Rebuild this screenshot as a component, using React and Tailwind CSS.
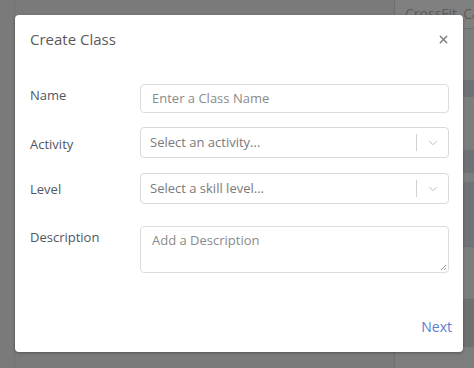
import React from "react";
import { ChevronDown, X } from "lucide-react";

function SelectBox({ placeholder }) {
  return (
    <div className="flex h-[31px] items-center rounded-[4px] border border-[#d9d9d9] bg-white pl-[9px]">
      <span className="flex-1 text-[13px] text-[#7a7a7a]">{placeholder}</span>
      <span className="h-[17px] w-px bg-[#d0d0d0]" />
      <span className="flex w-[31px] items-center justify-center">
        <ChevronDown className="h-[14px] w-[14px] text-[#b5b5b5]" strokeWidth={1.5} />
      </span>
    </div>
  );
}

export default function App() {
  return (
    <div
      className="relative h-[368px] w-[474px] overflow-hidden bg-[#7a7a7a]"
      style={{ fontFamily: '"Open Sans", "Liberation Sans", sans-serif' }}
    >
      {/* page behind the overlay */}
      <div className="absolute right-0 top-0 h-full w-[80px] border-l border-[#6f6f6f] bg-[#7d7d7d]">
        <div className="h-[29px] border-b border-[#6e6e6e] bg-[#808080] pl-[10px] pt-[3px] text-[14px] text-[#5c5c5c]">
          CrossFit_Ca
        </div>
        <div className="h-[51px]" />
        <div className="h-[17px] bg-[#6f7174]" />
        <div className="h-[53px]" />
        <div className="h-[23px] bg-[#6f7174]" />
        <div className="h-[9px]" />
        <div className="h-[65px] border-b border-[#6d6d6d] bg-[#6f7276]" />
        <div className="h-[53px] border-b border-[#6d6d6d]" />
        <div className="h-[47px] bg-[#707070]" />
      </div>
      <div className="absolute left-[14px] top-0 h-full w-px bg-[#737373]" />

      <div className="absolute left-[15px] top-[15px] flex h-[337px] w-[448px] flex-col rounded-[4px] bg-white shadow-[0_1px_3px_rgba(0,0,0,0.3)]">
        <div className="flex h-[48px] items-center justify-between pl-[15px] pr-[15px]">
          <span className="text-[15px] text-[#5a5a5a]">Create Class</span>
          <X className="mr-[-2px] h-[13px] w-[13px] text-[#777]" strokeWidth={2.5} />
        </div>

        <div className="mt-[21px] flex flex-col pl-[15px] pr-[14px]">
          <div className="flex">
            <div className="w-[110px] pt-[2px] text-[13px] text-[#4f5663]">Name</div>
            <div className="flex h-[29px] flex-1 items-center rounded-[4px] border border-[#dcdcdc] pl-[11px] text-[13px] text-[#8a8a8a]">
              Enter a Class Name
            </div>
          </div>

          <div className="mt-[14px] flex">
            <div className="w-[110px] pt-[8px] text-[13px] text-[#4f5663]">Activity</div>
            <div className="flex-1">
              <SelectBox placeholder="Select an activity..." />
            </div>
          </div>

          <div className="mt-[15px] flex">
            <div className="w-[110px] pt-[7px] text-[13px] text-[#4f5663]">Level</div>
            <div className="flex-1">
              <SelectBox placeholder="Select a skill level..." />
            </div>
          </div>

          <div className="mt-[22px] flex">
            <div className="w-[110px] pt-[2px] text-[13px] text-[#4f5663]">Description</div>
            <div className="relative h-[47px] flex-1 rounded-[4px] border border-[#dcdcdc] pl-[11px] pt-[4px] text-[13px] text-[#8a8a8a]">
              Add a Description
              <svg className="absolute bottom-[1px] right-[1px]" width="8" height="8" viewBox="0 0 8 8">
                <path d="M7 2 L2 7 M7 5 L5 7" stroke="#999" strokeWidth="1" />
              </svg>
            </div>
          </div>
        </div>

        <div className="mt-auto flex justify-end pb-[15px] pr-[11px]">
          <span className="text-[14px] text-[#5b7bd3]">Next</span>
        </div>
      </div>
    </div>
  );
}
